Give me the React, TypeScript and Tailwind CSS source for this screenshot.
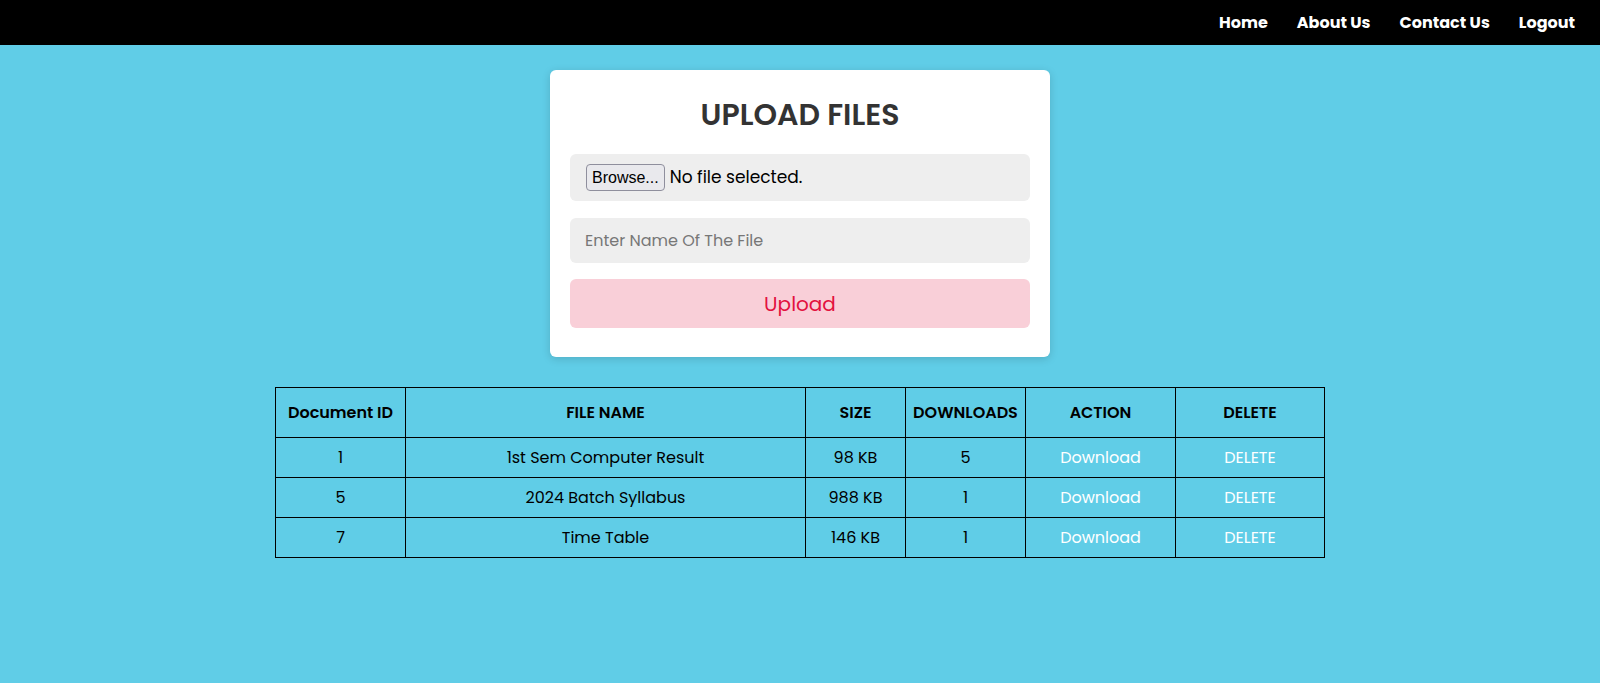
const rows = [
  { id: 1, name: "1st Sem Computer Result", size: "98 KB", downloads: 5 },
  { id: 5, name: "2024 Batch Syllabus", size: "988 KB", downloads: 1 },
  { id: 7, name: "Time Table", size: "146 KB", downloads: 1 },
];

const font = "font-['Poppins','Open_Sans',sans-serif]";

function Navbar() {
  return (
    <nav className="flex h-[45px] items-center justify-end gap-[29px] bg-black pr-[25px] text-[16px] font-bold text-white">
      <a href="#">Home</a>
      <a href="#">About Us</a>
      <a href="#">Contact Us</a>
      <a href="#">Logout</a>
    </nav>
  );
}

function UploadCard() {
  return (
    <div className="mt-[25px] w-[500px] rounded-md bg-white px-5 pt-[27px] pb-[29px] shadow-[0_2px_8px_rgba(0,0,0,0.15)]">
      <h2 className="mb-[21px] text-center text-[30px] leading-[36px] font-semibold text-[#333]">
        UPLOAD FILES
      </h2>
      <div className="flex h-[47px] items-center rounded-md bg-[#eeeeee] px-4 text-[17px] text-black">
        <button className="h-[27px] rounded-[4px] border border-[#8f8f9d] bg-[#e9e9ed] px-[5px] font-['Liberation_Sans',Arial,sans-serif] text-[16px] leading-none">
          Browse...
        </button>
        <span className="ml-[5px]">No file selected.</span>
      </div>
      <input
        className="mt-[17px] block h-[45px] w-full rounded-md bg-[#eeeeee] px-[15px] text-[16px] outline-none placeholder:text-[#777]"
        placeholder="Enter Name Of The File"
      />
      <button className="mt-[16px] block h-[49px] w-full rounded-md bg-[#f9cfd8] text-[20px] text-[#e3123f]">
        Upload
      </button>
    </div>
  );
}

function FilesTable() {
  const th = "border border-black text-[16px] font-semibold";
  const td = "border border-black";
  return (
    <table className="mt-[30px] w-[1050px] border-collapse text-center text-[16px] text-black">
      <thead>
        <tr className="h-[50px]">
          <th className={`${th} w-[130px]`}>Document ID</th>
          <th className={`${th} w-[400px]`}>FILE NAME</th>
          <th className={`${th} w-[100px]`}>SIZE</th>
          <th className={`${th} w-[120px]`}>DOWNLOADS</th>
          <th className={`${th} w-[150px]`}>ACTION</th>
          <th className={th}>DELETE</th>
        </tr>
      </thead>
      <tbody>
        {rows.map((r) => (
          <tr key={r.id} className="h-[40px]">
            <td className={td}>{r.id}</td>
            <td className={td}>{r.name}</td>
            <td className={td}>{r.size}</td>
            <td className={td}>{r.downloads}</td>
            <td className={`${td} text-white`}>
              <a href="#">Download</a>
            </td>
            <td className={`${td} text-white`}>
              <a href="#">DELETE</a>
            </td>
          </tr>
        ))}
      </tbody>
    </table>
  );
}

export default function App() {
  return (
    <div className={`min-h-[683px] bg-[#60cde7] ${font}`}>
      <Navbar />
      <main className="flex flex-col items-center">
        <UploadCard />
        <FilesTable />
      </main>
    </div>
  );
}
